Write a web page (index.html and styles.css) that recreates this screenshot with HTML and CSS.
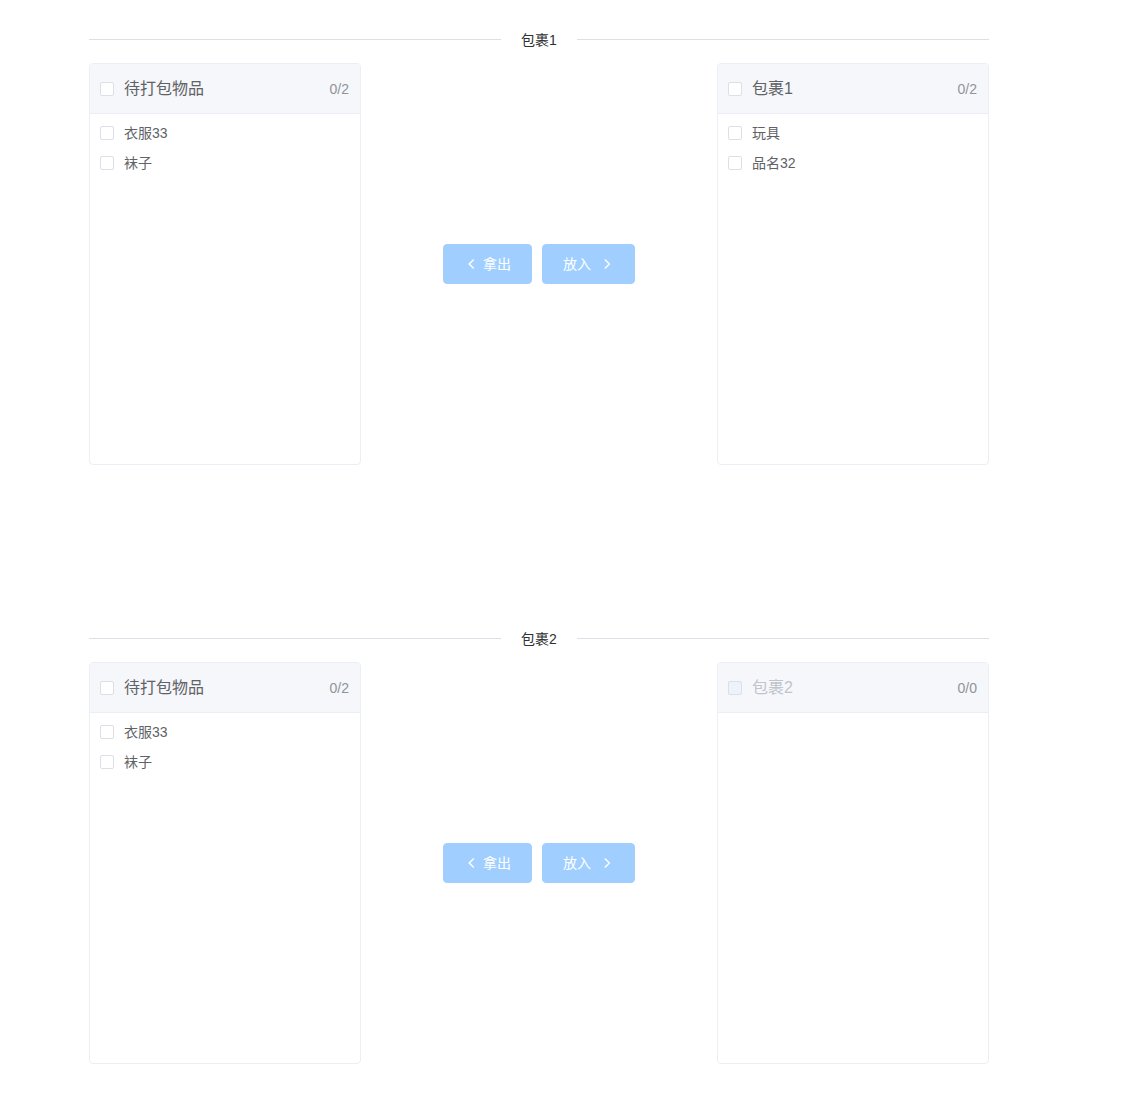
FILE: index.html
```html
<!DOCTYPE html>
<html lang="zh-CN">
<head>
  <meta charset="UTF-8" />
  <meta name="viewport" content="width=device-width, initial-scale=1.0"/>
  <title>包裹分配</title>
  <link rel="stylesheet" href="styles.css">
</head>
<body>
  <div class="page">

    <div class="bundle">
      <div class="divider"><span class="divider-text">包裹1</span></div>
      <div class="transfer">
        <div class="panel">
          <div class="panel-header">
            <label class="check"><span class="box"></span><span class="header-label">待打包物品</span></label>
            <span class="count">0/2</span>
          </div>
          <div class="panel-body">
            <label class="check item"><span class="box"></span><span class="item-label">衣服33</span></label>
            <label class="check item"><span class="box"></span><span class="item-label">袜子</span></label>
          </div>
        </div>

        <div class="buttons">
          <button class="btn" disabled>
            <svg class="arrow" viewBox="0 0 14 14"><path d="M9.8 2.6 L5.2 7 L9.8 11.4"/></svg>
            <span class="btn-text btn-text-left">拿出</span>
          </button>
          <button class="btn" disabled>
            <span class="btn-text btn-text-right">放入</span>
            <svg class="arrow" viewBox="0 0 14 14"><path d="M4.8 2.6 L9.4 7 L4.8 11.4"/></svg>
          </button>
        </div>

        <div class="panel">
          <div class="panel-header">
            <label class="check"><span class="box"></span><span class="header-label">包裹1</span></label>
            <span class="count">0/2</span>
          </div>
          <div class="panel-body">
            <label class="check item"><span class="box"></span><span class="item-label">玩具</span></label>
            <label class="check item"><span class="box"></span><span class="item-label">品名32</span></label>
          </div>
        </div>
      </div>
    </div>

    <div class="bundle">
      <div class="divider"><span class="divider-text">包裹2</span></div>
      <div class="transfer">
        <div class="panel">
          <div class="panel-header">
            <label class="check"><span class="box"></span><span class="header-label">待打包物品</span></label>
            <span class="count">0/2</span>
          </div>
          <div class="panel-body">
            <label class="check item"><span class="box"></span><span class="item-label">衣服33</span></label>
            <label class="check item"><span class="box"></span><span class="item-label">袜子</span></label>
          </div>
        </div>

        <div class="buttons">
          <button class="btn" disabled>
            <svg class="arrow" viewBox="0 0 14 14"><path d="M9.8 2.6 L5.2 7 L9.8 11.4"/></svg>
            <span class="btn-text btn-text-left">拿出</span>
          </button>
          <button class="btn" disabled>
            <span class="btn-text btn-text-right">放入</span>
            <svg class="arrow" viewBox="0 0 14 14"><path d="M4.8 2.6 L9.4 7 L4.8 11.4"/></svg>
          </button>
        </div>

        <div class="panel">
          <div class="panel-header">
            <label class="check disabled"><span class="box"></span><span class="header-label">包裹2</span></label>
            <span class="count">0/0</span>
          </div>
          <div class="panel-body"></div>
        </div>
      </div>
    </div>

  </div>
</body>
</html>
```

FILE: styles.css
```css
body {
  margin: 0;
  background-color: #fff;
  font-family: "Liberation Sans", "Noto Sans CJK SC", sans-serif;
  color: #606266;
}

.page {
  width: 900px;
  padding: 39px 0 0 89px;
}

.bundle + .bundle { margin-top: 173px; }

.divider {
  position: relative;
  height: 1px;
  background-color: #dcdfe6;
  margin-bottom: 23px;
}

.divider-text {
  position: absolute;
  left: 50%;
  top: 50%;
  transform: translate(-50%, -50%);
  padding: 0 20px;
  background-color: #fff;
  color: #303133;
  font-size: 14px;
  line-height: 1;
  white-space: nowrap;
}

.transfer {
  display: flex;
  align-items: center;
  justify-content: space-between;
}

.panel {
  width: 270px;
  height: 400px;
  border: 1px solid #ebeef5;
  border-radius: 4px;
  overflow: hidden;
  display: flex;
  flex-direction: column;
}

.panel-header {
  height: 49px;
  flex: none;
  background-color: #f5f7fa;
  border-bottom: 1px solid #ebeef5;
  display: flex;
  align-items: center;
  justify-content: space-between;
  padding: 0 11px 0 10px;
}

.header-label {
  font-size: 16px;
  line-height: 1;
  color: #606266;
}

.count {
  font-size: 14px;
  line-height: 1;
  color: #909399;
}

.panel-body {
  flex: 1;
  padding-top: 4px;
}

.check {
  display: flex;
  align-items: center;
  gap: 10px;
  cursor: pointer;
}

.item {
  height: 30px;
  padding-left: 10px;
  font-size: 14px;
  color: #606266;
}

.item-label { line-height: 1; }

.box {
  width: 12px;
  height: 12px;
  border: 1px solid #dcdfe6;
  border-radius: 2px;
  background-color: #fff;
  flex: none;
}

.check.disabled { cursor: not-allowed; }
.check.disabled .box {
  background-color: #edf2fc;
  border-color: #dcdfe6;
}
.check.disabled .header-label { color: #c0c4cc; }

.buttons {
  display: flex;
  gap: 10px;
}

.btn {
  height: 40px;
  display: flex;
  align-items: center;
  padding: 0 20px;
  border: 1px solid #a0cfff;
  border-radius: 4px;
  background-color: #a0cfff;
  color: #fff;
  font-family: inherit;
  font-size: 14px;
}

.btn[disabled] { cursor: not-allowed; }

.btn-text { line-height: 1; }

.arrow {
  width: 14px;
  height: 14px;
  fill: none;
  stroke: #fff;
  stroke-width: 1.4;
}

.btn-text-left { margin-left: 5px; }
.btn-text-right { margin-right: 9px; }
```
